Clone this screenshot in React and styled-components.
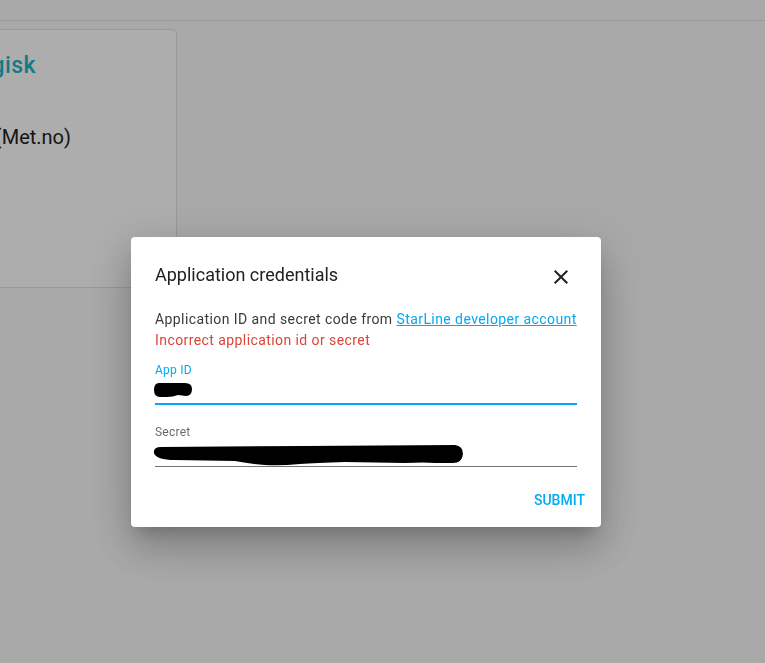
import React from 'react';
import styled, { createGlobalStyle } from 'styled-components';

const Global = createGlobalStyle`
  html, body {
    margin: 0;
    padding: 0;
    background: #fafafa;
    font-family: Roboto, "Noto Sans", sans-serif;
    overflow: hidden;
  }
`;

const Page = styled.div`
  height: 663px;
  display: flex;
  flex-direction: column;
`;

const TopBar = styled.div`
  height: 20px;
  border-bottom: 1px solid #e0e0e0;
`;

const Content = styled.div`
  padding-top: 8px;
`;

const Card = styled.div`
  margin-left: -24px;
  width: 201px;
  height: 259px;
  box-sizing: border-box;
  border: 1px solid #e0e0e0;
  border-radius: 4px;
  background: #fff;
  padding: 22px 24px 0;
`;

const Line = styled.div`
  width: ${p => p.end}px;
  display: flex;
  justify-content: flex-end;
  white-space: nowrap;
  font-size: ${p => p.size}px;
  font-weight: ${p => p.weight || 400};
  letter-spacing: ${p => p.spacing || 0}em;
  color: ${p => p.color};
  line-height: 28px;
  margin-top: ${p => p.top || 0}px;
`;

const Scrim = styled.div`
  position: fixed;
  inset: 0;
  background: rgba(0, 0, 0, 0.32);
  display: flex;
  align-items: flex-start;
  padding: 237px 0 0 131px;
`;

const Dialog = styled.div`
  width: 470px;
  height: 290px;
  box-sizing: border-box;
  background: #fff;
  border-radius: 4px;
  box-shadow: 0 11px 15px -7px rgba(0, 0, 0, 0.2),
    0 24px 38px 3px rgba(0, 0, 0, 0.14),
    0 9px 46px 8px rgba(0, 0, 0, 0.12);
  display: flex;
  flex-direction: column;
`;

const Header = styled.div`
  display: flex;
  align-items: center;
  justify-content: space-between;
  padding: 24px 24px 0;
`;

const Title = styled.h2`
  margin: 0;
  font-size: 18px;
  font-weight: 400;
  line-height: 28px;
  color: #212121;
`;

const CloseButton = styled.button`
  width: 24px;
  height: 24px;
  margin: 4px 4px 0 0;
  padding: 0;
  border: 0;
  background: none;
  color: #212121;
  display: flex;
  align-items: center;
  justify-content: center;
  cursor: pointer;
`;

const Body = styled.div`
  padding: 20px 24px 0;
  display: flex;
  flex-direction: column;
`;

const Text = styled.div`
  font-size: 14px;
  line-height: 21px;
  letter-spacing: 0.03em;
  color: ${p => p.color || '#3a3a3a'};
`;

const Link = styled.a`
  color: #03a9f4;
  text-decoration: underline;
`;

const Field = styled.div`
  height: 56px;
  box-sizing: border-box;
  border-bottom: ${p => (p.focused ? '2px solid #03a9f4' : '1px solid rgba(0, 0, 0, 0.55)')};
  margin-top: ${p => p.top || 0}px;
  padding-top: 13px;
  display: flex;
  flex-direction: column;
`;

const Label = styled.div`
  font-size: 12px;
  line-height: 16px;
  letter-spacing: 0.02em;
  color: ${p => (p.focused ? '#03a9f4' : 'rgba(0, 0, 0, 0.6)')};
`;

const Value = styled.div`
  margin-top: 4px;
  height: 22px;
`;

const Actions = styled.div`
  margin-top: auto;
  padding: 0 8px 9px;
  display: flex;
  justify-content: flex-end;
`;

const TextButton = styled.button`
  height: 36px;
  padding: 0 8px;
  border: 0;
  background: none;
  font-family: Roboto, sans-serif;
  font-size: 14px;
  font-weight: 500;
  letter-spacing: 0;
  text-transform: uppercase;
  color: #03a9f4;
  cursor: pointer;
`;

const CloseIcon = () => (
  <svg width="24" height="24" viewBox="0 0 24 24">
    <path
      fill="currentColor"
      d="M19,6.41L17.59,5L12,10.59L6.41,5L5,6.41L10.59,12L5,17.59L6.41,19L12,13.41L17.59,19L19,17.59L13.41,12L19,6.41Z"
    />
  </svg>
);

const ShortScribble = () => (
  <svg width="40" height="18" viewBox="0 0 40 18" style={{ overflow: 'visible' }}>
    <path
      fill="#000"
      d="M4,1 L30,1 Q37,1 37,7 Q37,14 31,14 L23,13 Q18,15 12,15 L5,15 Q-1,15 -1,8 Q-1,1 4,1 Z"
    />
  </svg>
);

const LongScribble = () => (
  <svg width="320" height="22" viewBox="0 0 320 22" style={{ overflow: 'visible' }}>
    <path
      fill="#000"
      d="M-1,9 Q-2,3 6,3 L150,2 L300,1 Q308,2 308,10 Q307,19 298,19 L280,19 Q270,18 250,19 L190,18 Q160,19 145,20 Q125,22 110,21 Q95,20 80,17 L20,16 Q1,16 -1,9 Z"
    />
  </svg>
);

export default function App() {
  return (
    <>
      <Global />
      <Page>
        <TopBar />
        <Content>
          <Card>
            <Line end={35} size={23} weight={500} spacing={0.02} color="#1cb6c9">
              Meteorologisk
            </Line>
            <Line end={70} size={20} color="#212121" top={43}>
              institutt (Met.no)
            </Line>
          </Card>
        </Content>
      </Page>
      <Scrim>
        <Dialog>
          <Header>
            <Title>Application credentials</Title>
            <CloseButton aria-label="Close">
              <CloseIcon />
            </CloseButton>
          </Header>
          <Body>
            <Text>
              Application ID and secret code from <Link href="#">StarLine developer account</Link>
            </Text>
            <Text color="#db4437">Incorrect application id or secret</Text>
            <Field focused top={-2}>
              <Label focused>App ID</Label>
              <Value>
                <ShortScribble />
              </Value>
            </Field>
            <Field top={6}>
              <Label>Secret</Label>
              <Value>
                <LongScribble />
              </Value>
            </Field>
          </Body>
          <Actions>
            <TextButton>Submit</TextButton>
          </Actions>
        </Dialog>
      </Scrim>
    </>
  );
}
